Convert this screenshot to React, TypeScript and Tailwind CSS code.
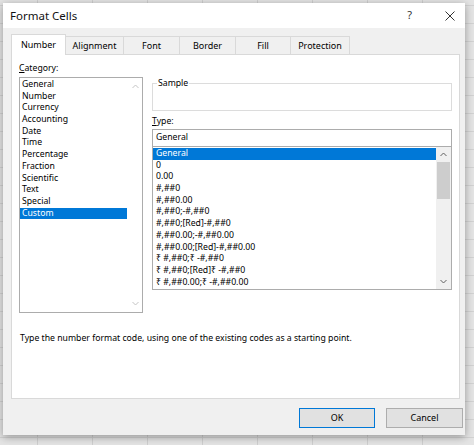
import React from "react"

const categories = [
  "General",
  "Number",
  "Currency",
  "Accounting",
  "Date",
  "Time",
  "Percentage",
  "Fraction",
  "Scientific",
  "Text",
  "Special",
  "Custom",
]

const types = [
  "General",
  "0",
  "0.00",
  "#,##0",
  "#,##0.00",
  "#,##0;-#,##0",
  "#,##0;[Red]-#,##0",
  "#,##0.00;-#,##0.00",
  "#,##0.00;[Red]-#,##0.00",
  "₹ #,##0;₹ -#,##0",
  "₹ #,##0;[Red]₹ -#,##0",
  "₹ #,##0.00;₹ -#,##0.00",
]

const tabs = ["Number", "Alignment", "Font", "Border", "Fill", "Protection"]
const tabWidths = ["w-[55px]", "w-[58px]", "w-[56px]", "w-[56px]", "w-[55px]", "w-[59px]"]

function Chevron({ up, color = "#606060" }: { up?: boolean; color?: string }) {
  return (
    <svg width="7" height="5" viewBox="0 0 7 5" className="block">
      <polyline
        points={up ? "0.5,4 3.5,1 6.5,4" : "0.5,1 3.5,4 6.5,1"}
        fill="none"
        stroke={color}
        strokeWidth="1"
      />
    </svg>
  )
}

export default function App() {
  return (
    <div className="w-[474px] h-[445px] overflow-hidden bg-[#e4e4e4] bg-[linear-gradient(to_right,#cfcfcf_1px,transparent_1px),linear-gradient(to_bottom,#d2d2d2_1px,transparent_1px)] bg-size-[55px_18px] bg-position-[37px_5px] pl-[3px] pt-[3px] font-['Noto_Sans',sans-serif] text-black">
      <div className="w-[462px] h-[432px] flex flex-col bg-[#f0f0f0] shadow-[0_2px_8px_rgba(0,0,0,0.35)]">
        {/* title bar */}
        <div className="h-[25px] bg-white flex items-center pl-[7px] pr-[10px] shrink-0">
          <span className="text-[11.5px] text-[#111]">Format Cells</span>
          <span className="ml-auto text-[11px] text-[#333] mr-[33px]">?</span>
          <svg width="10" height="10" viewBox="0 0 10 10">
            <path d="M0.5 0.5L9.5 9.5M9.5 0.5L0.5 9.5" stroke="#333" strokeWidth="1" />
          </svg>
        </div>

        <div className="flex-1 flex flex-col pl-[8px] pr-[2px]">
          {/* tabs */}
          <div className="flex items-end pt-[6px] h-[26px] shrink-0">
            {tabs.map((t, i) =>
              i === 0 ? (
                <div
                  key={t}
                  className={`${tabWidths[i]} h-[21px] bg-white border border-b-0 border-[#d9d9d9] flex items-center justify-center text-[9px] -mb-px relative z-10`}
                >
                  {t}
                </div>
              ) : (
                <div
                  key={t}
                  className={`${tabWidths[i]} h-[18px] bg-[#f0f0f0] border border-l-0 border-b-0 border-[#d9d9d9] flex items-center justify-center text-[9px]`}
                >
                  {t}
                </div>
              )
            )}
          </div>

          {/* panel */}
          <div className="w-[449px] h-[345px] bg-white border border-[#d9d9d9] flex flex-col px-[7px] pt-[7px] shrink-0 text-[8.7px]">
            <div className="flex gap-[9px]">
              {/* category */}
              <div className="w-[124px] flex flex-col">
                <div className="leading-[12px] h-[15px]">
                  <span className="underline">C</span>ategory:
                </div>
                <div className="h-[236px] border border-[#acacac] relative pt-[1px]">
                  {categories.map((c) => (
                    <div
                      key={c}
                      className={`h-[11.7px] leading-[11.7px] pl-[2px] mr-[15px] ${
                        c === "Custom" ? "bg-[#0078d7] text-white" : ""
                      }`}
                    >
                      {c}
                    </div>
                  ))}
                  <div className="absolute right-[3px] top-[6px]">
                    <Chevron up color="#c4c4c4" />
                  </div>
                  <div className="absolute right-[3px] bottom-[6px]">
                    <Chevron color="#c4c4c4" />
                  </div>
                </div>
              </div>

              {/* type */}
              <div className="w-[300px] flex flex-col pt-[21px]">
                <div className="h-[28px] border border-[#dcdcdc] relative">
                  <span className="absolute left-[4px] -top-[7px] bg-white px-px leading-[12px]">
                    Sample
                  </span>
                </div>
                <div className="leading-[12px] h-[18px] pt-[4px]">
                  <span className="underline">T</span>ype:
                </div>
                <div className="h-[18px] border border-[#acacac] flex items-center pl-[3px]">
                  General
                </div>
                <div className="h-[143px] border border-t-0 border-[#acacac] flex">
                  <div className="flex-1 pt-px">
                    {types.map((t, i) => (
                      <div
                        key={t}
                        className={`h-[11.7px] leading-[11.7px] pl-[3px] whitespace-nowrap ${
                          i === 0 ? "bg-[#0078d7] text-white" : ""
                        }`}
                      >
                        {t}
                      </div>
                    ))}
                  </div>
                  <div className="w-[15px] bg-[#f0f0f0] flex flex-col items-center">
                    <div className="h-[15px] flex items-center justify-center">
                      <Chevron up />
                    </div>
                    <div className="w-[13px] h-[37px] bg-[#cdcdcd]" />
                    <div className="flex-1" />
                    <div className="h-[15px] flex items-center justify-center">
                      <Chevron />
                    </div>
                  </div>
                </div>
              </div>
            </div>

            <div className="leading-[12px] mt-[19px] pl-px">
              Type the number format code, using one of the existing codes as a starting point.
            </div>
          </div>

          {/* buttons */}
          <div className="flex justify-end gap-[11px] mt-[9px]">
            <button className="w-[76px] h-[20px] bg-[#e1e1e1] border border-[#0078d7] text-[9px] flex items-center justify-center">
              OK
            </button>
            <button className="w-[77px] h-[20px] bg-[#e1e1e1] border border-[#adadad] text-[9px] flex items-center justify-center">
              Cancel
            </button>
          </div>
        </div>
      </div>
    </div>
  )
}
